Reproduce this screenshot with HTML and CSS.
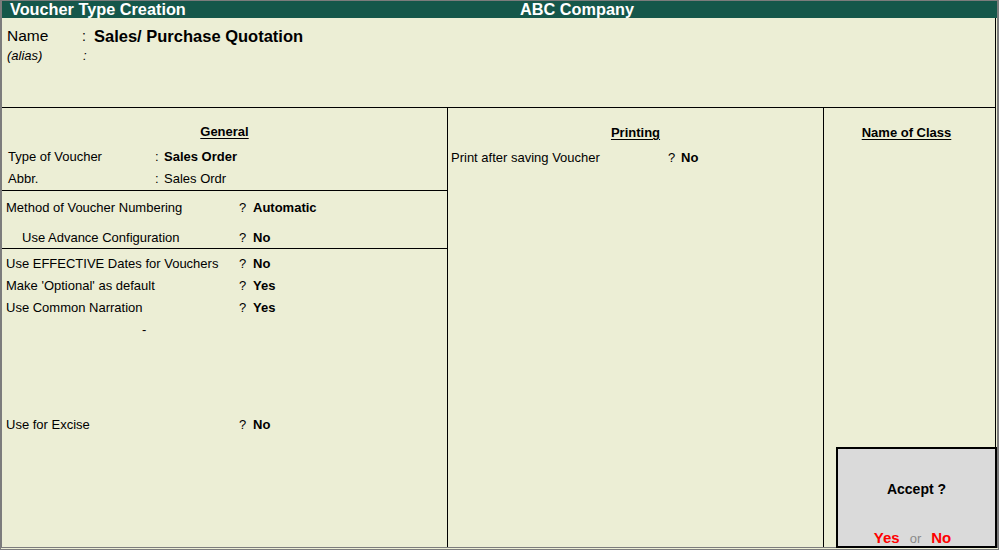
FILE: index.html
```html
<!DOCTYPE html>
<html>
<head>
<meta charset="utf-8">
<title>Voucher Type Creation</title>
<link rel="stylesheet" href="styles.css">
</head>
<body>
<div class="frame">
  <div class="titlebar">
    <span class="title-left">Voucher Type Creation</span>
    <span class="title-company">ABC Company</span>
  </div>
  <div class="content">
    <div class="name-area">
      <div class="name-row">
        <span class="name-label">Name</span>
        <span class="name-colon">:</span>
        <span class="name-value">Sales/ Purchase Quotation</span>
      </div>
      <div class="alias-row">
        <span class="alias-label">(alias)</span>
        <span class="alias-colon">:</span>
      </div>
    </div>
    <div class="columns">
      <div class="col col-general">
        <div class="col-heading"><span>General</span></div>
        <div class="section section-type">
          <div class="row row-type"><span class="lbl lbl-type">Type of Voucher</span><span class="colon">:</span><b>Sales Order</b></div>
          <div class="row row-type"><span class="lbl lbl-type">Abbr.</span><span class="colon">:</span><span>Sales Ordr</span></div>
        </div>
        <div class="section section-numbering">
          <div class="row"><span class="lbl">Method of Voucher Numbering</span><span class="q">?</span><b>Automatic</b></div>
          <div class="row row-advance"><span class="lbl lbl-indent">Use Advance Configuration</span><span class="q">?</span><b>No</b></div>
        </div>
        <div class="section section-options">
          <div class="row"><span class="lbl">Use EFFECTIVE Dates for Vouchers</span><span class="q">?</span><b>No</b></div>
          <div class="row"><span class="lbl">Make 'Optional' as default</span><span class="q">?</span><b>Yes</b></div>
          <div class="row"><span class="lbl">Use Common Narration</span><span class="q">?</span><b>Yes</b></div>
          <div class="row"><span class="dash">-</span></div>
          <div class="row row-excise"><span class="lbl">Use for Excise</span><span class="q">?</span><b>No</b></div>
        </div>
      </div>
      <div class="col col-printing">
        <div class="col-heading col-heading-low"><span>Printing</span></div>
        <div class="row row-print"><span class="lbl lbl-print">Print after saving Voucher</span><span class="q q-print">?</span><b>No</b></div>
      </div>
      <div class="col col-class">
        <div class="col-heading col-heading-low heading-class"><span>Name of Class</span></div>
      </div>
    </div>
  </div>
  <div class="accept">
    <div class="accept-title">Accept ?</div>
    <div class="accept-choices"><span class="yes">Yes</span><span class="or">or</span><span class="no">No</span></div>
  </div>
</div>
</body>
</html>
```
FILE: styles.css
```css
html, body {
  margin: 0;
  padding: 0;
  background: #eceed5;
}
body {
  font-family: "Liberation Sans", Arial, sans-serif;
  font-size: 13px;
  color: #000;
}
.frame {
  position: relative;
  width: 999px;
  height: 550px;
  box-sizing: border-box;
  border-top: 1px solid #7c7c7c;
  border-left: 2px solid #7c7c7c;
  border-right: 2px solid #7c7c7c;
  border-bottom: 3px double #7c7c7c;
  background: #eceed5;
  display: flex;
  flex-direction: column;
}
.titlebar {
  height: 17px;
  flex: none;
  background: #15574a;
  color: #fff;
  font-weight: bold;
  font-size: 16.3px;
  line-height: 17px;
  display: flex;
  white-space: nowrap;
}
.title-left {
  padding-left: 8px;
  width: 510px;
}
.content {
  flex: 1;
  display: flex;
  flex-direction: column;
  border-right: 1px solid #000;
  margin-right: 1px;
  min-height: 0;
}
.name-area {
  flex: none;
  border-bottom: 1px solid #000;
  padding-left: 5px;
  box-sizing: border-box;
  height: 90px;
}
.name-row {
  display: flex;
  align-items: center;
  height: 20px;
  margin-top: 8px;
  font-size: 15.5px;
}
.name-label {
  width: 75px;
}
.name-colon {
  width: 12px;
  font-size: 14px;
}
.name-value {
  font-weight: bold;
  font-size: 16.5px;
}
.alias-row {
  display: flex;
  align-items: center;
  height: 18px;
  font-size: 13px;
  font-style: italic;
}
.alias-label {
  width: 76px;
}
.columns {
  flex: 1;
  display: flex;
  min-height: 0;
}
.col {
  box-sizing: border-box;
  padding-top: 12px;
}
.col-general {
  width: 446px;
  border-right: 1px solid #000;
  flex: none;
}
.col-printing {
  width: 376px;
  border-right: 1px solid #000;
  flex: none;
}
.col-class {
  flex: 1;
}
.col-heading {
  text-align: center;
  font-weight: bold;
  line-height: 22px;
  height: 22px;
  padding-top: 1px;
}
.col-heading-low {
  padding-top: 2px;
}
.heading-class {
  padding-right: 6px;
}
.col-heading span {
  text-decoration: underline;
  text-underline-offset: 2px;
}
.row {
  display: flex;
  align-items: center;
  height: 22px;
  white-space: nowrap;
}
.row b {
  font-weight: bold;
}
.lbl {
  width: 233px;
  flex: none;
  padding-left: 4px;
}
.lbl-indent {
  padding-left: 20px;
  width: 217px;
}
.q {
  width: 14px;
  flex: none;
}
.section-type {
  margin-top: 2px;
  padding-bottom: 1px;
  border-bottom: 1px solid #000;
}
.lbl-type {
  width: 147px;
  padding-left: 6px;
}
.colon {
  width: 9px;
  flex: none;
}
.section-numbering {
  padding-top: 5px;
  border-bottom: 1px solid #000;
}
.row-advance {
  margin-top: 8px;
}
.section-options {
  padding-top: 3px;
}
.dash {
  padding-left: 140px;
}
.row-excise {
  margin-top: 73px;
}
.row-print {
  margin-top: 2px;
}
.lbl-print {
  width: 217px;
  padding-left: 3px;
}
.q-print {
  width: 13px;
}
.accept {
  position: absolute;
  left: 834px;
  top: 446px;
  width: 161px;
  height: 101px;
  box-sizing: border-box;
  border: 2px solid #000;
  background: #dadada;
  display: flex;
  flex-direction: column;
  align-items: center;
  padding-right: 8px;
}
.accept-title {
  font-weight: bold;
  font-size: 14px;
  margin-top: 31px;
  margin-left: 8px;
  line-height: 18px;
}
.accept-choices {
  margin-top: auto;
  margin-bottom: -2px;
  line-height: 18px;
  display: flex;
  gap: 10px;
  align-items: baseline;
}
.yes, .no {
  color: #ff0000;
  font-weight: bold;
  font-size: 15px;
}
.or {
  color: #8a8a8a;
  font-size: 13px;
}
```
